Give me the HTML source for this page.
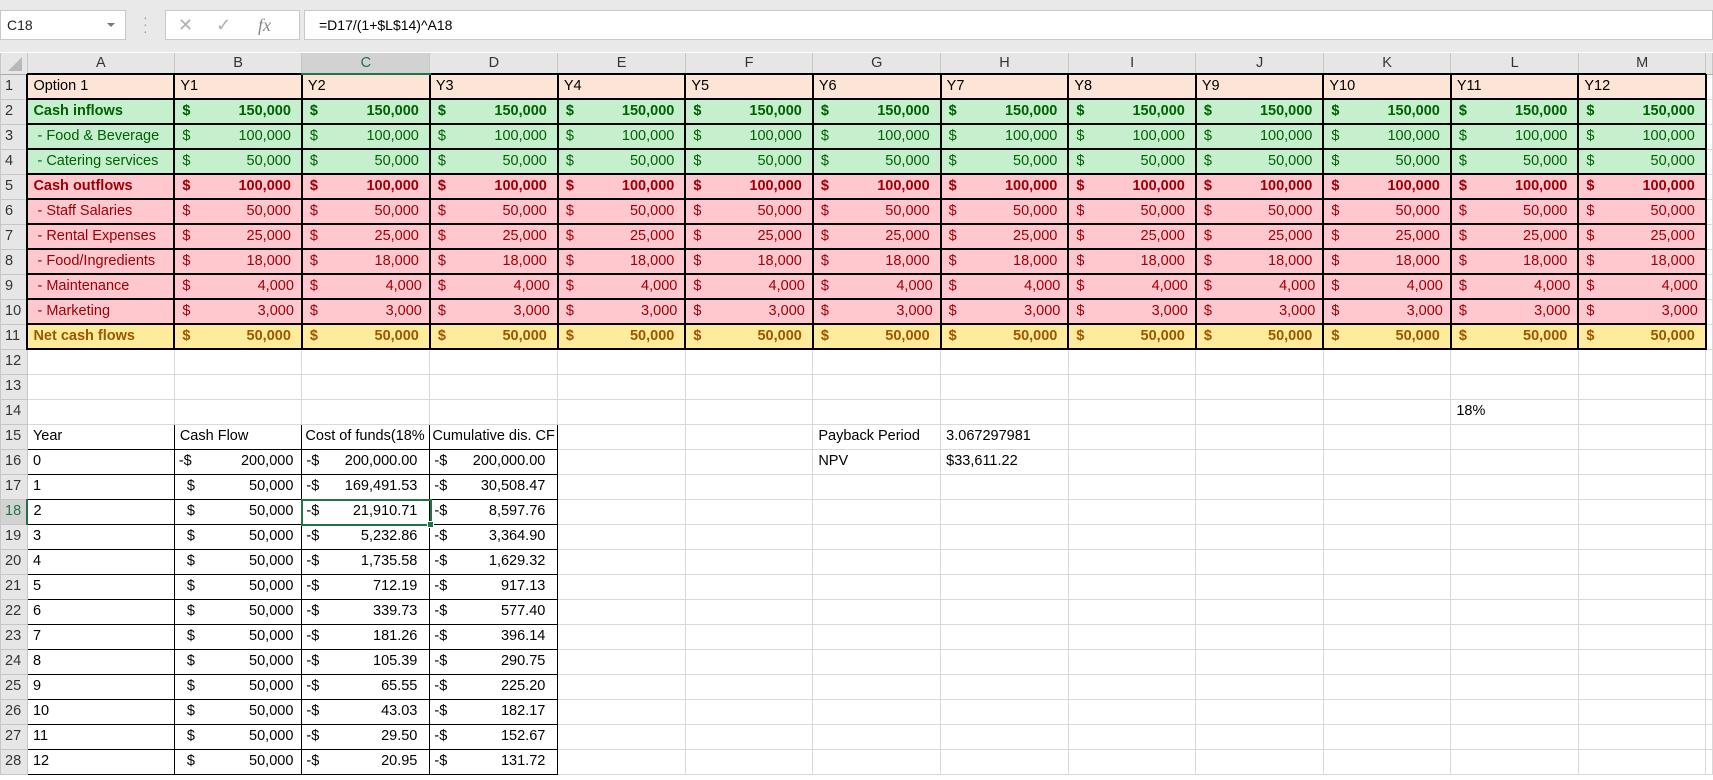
<!DOCTYPE html>
<html><head><meta charset="utf-8">
<style>
*{box-sizing:border-box;margin:0;padding:0}
html,body{width:1713px;height:780px;overflow:hidden}
body{background:#fff;font-family:"Liberation Sans",sans-serif;font-size:14.5px;color:#000;position:relative}
#top{position:absolute;left:0;top:0;width:1713px;height:52px;background:#e9e9e9}
.nb{position:absolute;left:0;top:10px;width:126px;height:30px;background:#fff;border:1px solid #c8c8c8;padding:6px 0 0 6px;font-size:14px;color:#222}
.nb .ar{position:absolute;right:10px;top:12px;width:0;height:0;border-left:4px solid transparent;border-right:4px solid transparent;border-top:4px solid #777}
.dots{position:absolute;left:143px;top:14px;color:#999;font-size:14px;line-height:7px;width:4px}
.fxb{position:absolute;left:165px;top:10px;width:135px;height:30px;background:#fff;border:1px solid #c8c8c8;color:#b0b0b0}
.fxb span{position:absolute;top:4px;font-size:18px}
.fb{position:absolute;left:304px;top:10px;width:1409px;height:30px;background:#fff;border:1px solid #c8c8c8;padding:6px 0 0 14px;font-size:14px}
#wrap{position:absolute;left:0;top:53px;width:1713px;height:727px;overflow:hidden}
table{border-collapse:collapse;table-layout:fixed}
td{height:25px;border:1px solid #d9d9d9;white-space:nowrap;overflow:hidden;padding:0 0 0 5px;line-height:23px;position:relative}
tr.h td{height:21px;line-height:20px;background:#e6e6e6;text-align:center;color:#333;border-color:#c6c6c6;border-top:none;border-bottom:1px solid #aaa;padding:0}
tr.h td.sel{background:#d2d2d2;border-bottom:2px solid #217346;color:#217346}
td.r{background:#e6e6e6;color:#333;border-color:#c6c6c6;padding:0 0 0 4px}
td.rs{background:#d2d2d2;color:#217346;border-right:2px solid #217346}
.t td.x{border:2px solid #000}
.pe td.x{background:#fce4d6}
.gr td.x{background:#c6efce;color:#006100}
.rd td.x{background:#ffc7ce;color:#9c0006}
.ye td.x{background:#ffeb9c;color:#9c5700}
.bo td.x{font-weight:bold}
td.c{text-align:right;padding:0 10px 0 0}
td.c7{text-align:right;padding:0 7px 0 0}
u{text-decoration:none;position:absolute;left:7px;top:0}
.lw td.k{border:1px solid #000}
td.m{text-align:right;padding:0 8px 0 0}
td.m u{left:12px}
td.m u.n{left:4px}
td.m2{text-align:right;padding:0 12px 0 0}
td.m2 u{left:4px}
td.ov{overflow:visible}
.selbox{position:absolute;left:301px;top:499px;width:131px;height:27px;border:2px solid #217346;pointer-events:none}
.selbox:after{content:"";position:absolute;right:-4px;bottom:-4px;width:5px;height:5px;background:#217346;border:1px solid #fff}
.tri{position:absolute;left:8px;top:57px;width:0;height:0;border-left:14px solid transparent;border-bottom:14px solid #b8b8b8}
</style></head><body>
<div id="top">
<div class="nb">C18<div class="ar"></div></div>
<div class="dots">·<br>·<br>·</div>
<div class="fxb"><span style="left:12px">✕</span><span style="left:50px">✓</span><span style="left:92px;font-family:'Liberation Serif',serif;font-style:italic;color:#888">fx</span></div>
<div class="fb">=D17/(1+$L$14)^A18</div>
</div>
<div id="wrap">
<table>
<colgroup><col style="width:27px"><col style="width:147px"><col style="width:128px"><col style="width:128px"><col style="width:128px"><col style="width:128px"><col style="width:128px"><col style="width:128px"><col style="width:128px"><col style="width:128px"><col style="width:128px"><col style="width:128px"><col style="width:128px"><col style="width:128px"><col style="width:3px"></colgroup>
<tr class="h"><td></td><td>A</td><td>B</td><td class="sel">C</td><td>D</td><td>E</td><td>F</td><td>G</td><td>H</td><td>I</td><td>J</td><td>K</td><td>L</td><td>M</td><td></td></tr>
<tr class="t pe"><td class="r">1</td><td class="x">Option 1</td><td class="x">Y1</td><td class="x">Y2</td><td class="x">Y3</td><td class="x">Y4</td><td class="x">Y5</td><td class="x">Y6</td><td class="x">Y7</td><td class="x">Y8</td><td class="x">Y9</td><td class="x">Y10</td><td class="x">Y11</td><td class="x">Y12</td><td></td></tr>
<tr class="t gr bo"><td class="r">2</td><td class="x">Cash inflows</td><td class="x c"><u>$</u>150,000</td><td class="x c"><u>$</u>150,000</td><td class="x c"><u>$</u>150,000</td><td class="x c"><u>$</u>150,000</td><td class="x c"><u>$</u>150,000</td><td class="x c"><u>$</u>150,000</td><td class="x c"><u>$</u>150,000</td><td class="x c"><u>$</u>150,000</td><td class="x c"><u>$</u>150,000</td><td class="x c"><u>$</u>150,000</td><td class="x c"><u>$</u>150,000</td><td class="x c"><u>$</u>150,000</td><td></td></tr>
<tr class="t gr"><td class="r">3</td><td class="x">&nbsp;- Food &amp; Beverage</td><td class="x c"><u>$</u>100,000</td><td class="x c"><u>$</u>100,000</td><td class="x c"><u>$</u>100,000</td><td class="x c"><u>$</u>100,000</td><td class="x c"><u>$</u>100,000</td><td class="x c"><u>$</u>100,000</td><td class="x c"><u>$</u>100,000</td><td class="x c"><u>$</u>100,000</td><td class="x c"><u>$</u>100,000</td><td class="x c"><u>$</u>100,000</td><td class="x c"><u>$</u>100,000</td><td class="x c"><u>$</u>100,000</td><td></td></tr>
<tr class="t gr"><td class="r">4</td><td class="x">&nbsp;- Catering services</td><td class="x c"><u>$</u>50,000</td><td class="x c"><u>$</u>50,000</td><td class="x c"><u>$</u>50,000</td><td class="x c"><u>$</u>50,000</td><td class="x c"><u>$</u>50,000</td><td class="x c"><u>$</u>50,000</td><td class="x c"><u>$</u>50,000</td><td class="x c"><u>$</u>50,000</td><td class="x c"><u>$</u>50,000</td><td class="x c"><u>$</u>50,000</td><td class="x c"><u>$</u>50,000</td><td class="x c"><u>$</u>50,000</td><td></td></tr>
<tr class="t rd bo"><td class="r">5</td><td class="x">Cash outflows</td><td class="x c"><u>$</u>100,000</td><td class="x c"><u>$</u>100,000</td><td class="x c"><u>$</u>100,000</td><td class="x c"><u>$</u>100,000</td><td class="x c"><u>$</u>100,000</td><td class="x c"><u>$</u>100,000</td><td class="x c"><u>$</u>100,000</td><td class="x c"><u>$</u>100,000</td><td class="x c"><u>$</u>100,000</td><td class="x c"><u>$</u>100,000</td><td class="x c"><u>$</u>100,000</td><td class="x c"><u>$</u>100,000</td><td></td></tr>
<tr class="t rd"><td class="r">6</td><td class="x">&nbsp;- Staff Salaries</td><td class="x c"><u>$</u>50,000</td><td class="x c"><u>$</u>50,000</td><td class="x c"><u>$</u>50,000</td><td class="x c"><u>$</u>50,000</td><td class="x c"><u>$</u>50,000</td><td class="x c"><u>$</u>50,000</td><td class="x c"><u>$</u>50,000</td><td class="x c"><u>$</u>50,000</td><td class="x c"><u>$</u>50,000</td><td class="x c"><u>$</u>50,000</td><td class="x c"><u>$</u>50,000</td><td class="x c"><u>$</u>50,000</td><td></td></tr>
<tr class="t rd"><td class="r">7</td><td class="x">&nbsp;- Rental Expenses</td><td class="x c"><u>$</u>25,000</td><td class="x c"><u>$</u>25,000</td><td class="x c"><u>$</u>25,000</td><td class="x c"><u>$</u>25,000</td><td class="x c"><u>$</u>25,000</td><td class="x c"><u>$</u>25,000</td><td class="x c"><u>$</u>25,000</td><td class="x c"><u>$</u>25,000</td><td class="x c"><u>$</u>25,000</td><td class="x c"><u>$</u>25,000</td><td class="x c"><u>$</u>25,000</td><td class="x c"><u>$</u>25,000</td><td></td></tr>
<tr class="t rd"><td class="r">8</td><td class="x">&nbsp;- Food/Ingredients</td><td class="x c"><u>$</u>18,000</td><td class="x c"><u>$</u>18,000</td><td class="x c"><u>$</u>18,000</td><td class="x c"><u>$</u>18,000</td><td class="x c"><u>$</u>18,000</td><td class="x c"><u>$</u>18,000</td><td class="x c"><u>$</u>18,000</td><td class="x c"><u>$</u>18,000</td><td class="x c"><u>$</u>18,000</td><td class="x c"><u>$</u>18,000</td><td class="x c"><u>$</u>18,000</td><td class="x c"><u>$</u>18,000</td><td></td></tr>
<tr class="t rd"><td class="r">9</td><td class="x">&nbsp;- Maintenance</td><td class="x c7"><u>$</u>4,000</td><td class="x c7"><u>$</u>4,000</td><td class="x c7"><u>$</u>4,000</td><td class="x c7"><u>$</u>4,000</td><td class="x c7"><u>$</u>4,000</td><td class="x c7"><u>$</u>4,000</td><td class="x c7"><u>$</u>4,000</td><td class="x c7"><u>$</u>4,000</td><td class="x c7"><u>$</u>4,000</td><td class="x c7"><u>$</u>4,000</td><td class="x c7"><u>$</u>4,000</td><td class="x c7"><u>$</u>4,000</td><td></td></tr>
<tr class="t rd"><td class="r">10</td><td class="x">&nbsp;- Marketing</td><td class="x c7"><u>$</u>3,000</td><td class="x c7"><u>$</u>3,000</td><td class="x c7"><u>$</u>3,000</td><td class="x c7"><u>$</u>3,000</td><td class="x c7"><u>$</u>3,000</td><td class="x c7"><u>$</u>3,000</td><td class="x c7"><u>$</u>3,000</td><td class="x c7"><u>$</u>3,000</td><td class="x c7"><u>$</u>3,000</td><td class="x c7"><u>$</u>3,000</td><td class="x c7"><u>$</u>3,000</td><td class="x c7"><u>$</u>3,000</td><td></td></tr>
<tr class="t ye bo"><td class="r">11</td><td class="x">Net cash flows</td><td class="x c"><u>$</u>50,000</td><td class="x c"><u>$</u>50,000</td><td class="x c"><u>$</u>50,000</td><td class="x c"><u>$</u>50,000</td><td class="x c"><u>$</u>50,000</td><td class="x c"><u>$</u>50,000</td><td class="x c"><u>$</u>50,000</td><td class="x c"><u>$</u>50,000</td><td class="x c"><u>$</u>50,000</td><td class="x c"><u>$</u>50,000</td><td class="x c"><u>$</u>50,000</td><td class="x c"><u>$</u>50,000</td><td></td></tr>
<tr><td class="r">12</td><td></td><td></td><td></td><td></td><td></td><td></td><td></td><td></td><td></td><td></td><td></td><td></td><td></td><td></td></tr>
<tr><td class="r">13</td><td></td><td></td><td></td><td></td><td></td><td></td><td></td><td></td><td></td><td></td><td></td><td></td><td></td><td></td></tr>
<tr><td class="r">14</td><td></td><td></td><td></td><td></td><td></td><td></td><td></td><td></td><td></td><td></td><td></td><td>18%</td><td></td><td></td></tr>
<tr class="lw"><td class="r">15</td><td class="k">Year</td><td class="k">Cash Flow</td><td class="k" style="padding-left:3px">Cost of funds(18%</td><td class="k ov" style="padding-left:2px">Cumulative dis. CF</td><td></td><td></td><td>Payback Period</td><td>3.067297981</td><td></td><td></td><td></td><td></td><td></td><td></td></tr>
<tr class="lw"><td class="r">16</td><td class="k">0</td><td class="k m"><u class="n">-$</u>200,000</td><td class="k m2"><u>-$</u>200,000.00</td><td class="k m2"><u>-$</u>200,000.00</td><td></td><td></td><td>NPV</td><td>$33,611.22</td><td></td><td></td><td></td><td></td><td></td><td></td></tr>
<tr class="lw"><td class="r">17</td><td class="k">1</td><td class="k m"><u>$</u>50,000</td><td class="k m2"><u>-$</u>169,491.53</td><td class="k m2"><u>-$</u>30,508.47</td><td></td><td></td><td></td><td></td><td></td><td></td><td></td><td></td><td></td><td></td></tr>
<tr class="lw"><td class="r rs">18</td><td class="k">2</td><td class="k m"><u>$</u>50,000</td><td class="k m2"><u>-$</u>21,910.71</td><td class="k m2"><u>-$</u>8,597.76</td><td></td><td></td><td></td><td></td><td></td><td></td><td></td><td></td><td></td><td></td></tr>
<tr class="lw"><td class="r">19</td><td class="k">3</td><td class="k m"><u>$</u>50,000</td><td class="k m2"><u>-$</u>5,232.86</td><td class="k m2"><u>-$</u>3,364.90</td><td></td><td></td><td></td><td></td><td></td><td></td><td></td><td></td><td></td><td></td></tr>
<tr class="lw"><td class="r">20</td><td class="k">4</td><td class="k m"><u>$</u>50,000</td><td class="k m2"><u>-$</u>1,735.58</td><td class="k m2"><u>-$</u>1,629.32</td><td></td><td></td><td></td><td></td><td></td><td></td><td></td><td></td><td></td><td></td></tr>
<tr class="lw"><td class="r">21</td><td class="k">5</td><td class="k m"><u>$</u>50,000</td><td class="k m2"><u>-$</u>712.19</td><td class="k m2"><u>-$</u>917.13</td><td></td><td></td><td></td><td></td><td></td><td></td><td></td><td></td><td></td><td></td></tr>
<tr class="lw"><td class="r">22</td><td class="k">6</td><td class="k m"><u>$</u>50,000</td><td class="k m2"><u>-$</u>339.73</td><td class="k m2"><u>-$</u>577.40</td><td></td><td></td><td></td><td></td><td></td><td></td><td></td><td></td><td></td><td></td></tr>
<tr class="lw"><td class="r">23</td><td class="k">7</td><td class="k m"><u>$</u>50,000</td><td class="k m2"><u>-$</u>181.26</td><td class="k m2"><u>-$</u>396.14</td><td></td><td></td><td></td><td></td><td></td><td></td><td></td><td></td><td></td><td></td></tr>
<tr class="lw"><td class="r">24</td><td class="k">8</td><td class="k m"><u>$</u>50,000</td><td class="k m2"><u>-$</u>105.39</td><td class="k m2"><u>-$</u>290.75</td><td></td><td></td><td></td><td></td><td></td><td></td><td></td><td></td><td></td><td></td></tr>
<tr class="lw"><td class="r">25</td><td class="k">9</td><td class="k m"><u>$</u>50,000</td><td class="k m2"><u>-$</u>65.55</td><td class="k m2"><u>-$</u>225.20</td><td></td><td></td><td></td><td></td><td></td><td></td><td></td><td></td><td></td><td></td></tr>
<tr class="lw"><td class="r">26</td><td class="k">10</td><td class="k m"><u>$</u>50,000</td><td class="k m2"><u>-$</u>43.03</td><td class="k m2"><u>-$</u>182.17</td><td></td><td></td><td></td><td></td><td></td><td></td><td></td><td></td><td></td><td></td></tr>
<tr class="lw"><td class="r">27</td><td class="k">11</td><td class="k m"><u>$</u>50,000</td><td class="k m2"><u>-$</u>29.50</td><td class="k m2"><u>-$</u>152.67</td><td></td><td></td><td></td><td></td><td></td><td></td><td></td><td></td><td></td><td></td></tr>
<tr class="lw"><td class="r">28</td><td class="k">12</td><td class="k m"><u>$</u>50,000</td><td class="k m2"><u>-$</u>20.95</td><td class="k m2"><u>-$</u>131.72</td><td></td><td></td><td></td><td></td><td></td><td></td><td></td><td></td><td></td><td></td></tr>
</table>
</div>
<div class="tri"></div>
<div class="selbox"></div>
</body></html>
